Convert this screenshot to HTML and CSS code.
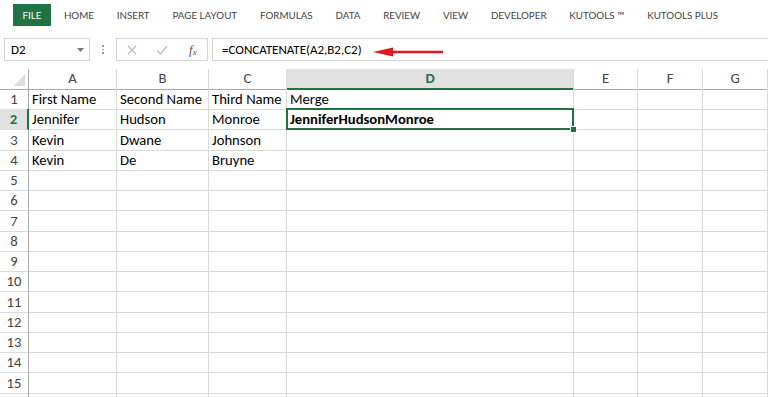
FILE: index.html
```html
<!DOCTYPE html>
<html lang="en">
<head>
<meta charset="utf-8">
<title>Excel CONCATENATE</title>
<link rel="stylesheet" href="styles.css">
</head>
<body>
<div class="ribbon">
  <span class="tab file">FILE</span>
  <span class="tab">HOME</span>
  <span class="tab">INSERT</span>
  <span class="tab">PAGE LAYOUT</span>
  <span class="tab">FORMULAS</span>
  <span class="tab">DATA</span>
  <span class="tab">REVIEW</span>
  <span class="tab">VIEW</span>
  <span class="tab">DEVELOPER</span>
  <span class="tab">KUTOOLS ™</span>
  <span class="tab">KUTOOLS PLUS</span>
</div>

<div class="fbar">
  <div class="namebox">
    <span class="name">D2</span>
    <svg class="drop" width="7" height="4" viewBox="0 0 7 4"><path d="M0 0H7L3.5 4Z" fill="#7a7a7a"/></svg>
  </div>
  <div class="dots"><i></i><i></i><i></i></div>
  <div class="buttons">
    <svg class="btn" width="10" height="10" viewBox="0 0 10 10"><path d="M1 1L9 9M9 1L1 9" stroke="#bdbdbd" stroke-width="1.2" fill="none"/></svg>
    <svg class="btn" width="12" height="10" viewBox="0 0 12 10"><path d="M1 5.5L4.5 9L11 1" stroke="#bdbdbd" stroke-width="1.2" fill="none"/></svg>
    <span class="fx">f<sub>x</sub></span>
  </div>
  <div class="formula">
    <span class="ftext">=CONCATENATE(A2,B2,C2)</span>
    <svg class="arrow" width="72" height="12" viewBox="0 0 72 12"><path d="M0 6L20 1.5V4.8H70V7.2H20V10.5Z" fill="#e3191c"/></svg>
  </div>
</div>

<div class="sheet">
  <div class="row head">
    <div class="cell corner"><svg width="12" height="12" viewBox="0 0 12 12"><path d="M11 0V12H0Z" fill="#dedede"/></svg></div>
    <div class="cell col">A</div>
    <div class="cell col">B</div>
    <div class="cell col">C</div>
    <div class="cell col sel">D</div>
    <div class="cell col">E</div>
    <div class="cell col">F</div>
    <div class="cell col">G</div>
  </div>
  <div class="row">
    <div class="cell num">1</div>
    <div class="cell">First Name</div>
    <div class="cell">Second Name</div>
    <div class="cell">Third Name</div>
    <div class="cell">Merge</div>
    <div class="cell"></div><div class="cell"></div><div class="cell"></div>
  </div>
  <div class="row">
    <div class="cell num sel">2</div>
    <div class="cell">Jennifer</div>
    <div class="cell">Hudson</div>
    <div class="cell">Monroe</div>
    <div class="cell active"><b>JenniferHudsonMonroe</b></div>
    <div class="cell"></div><div class="cell"></div><div class="cell"></div>
  </div>
  <div class="row">
    <div class="cell num">3</div>
    <div class="cell">Kevin</div>
    <div class="cell">Dwane</div>
    <div class="cell">Johnson</div>
    <div class="cell"></div><div class="cell"></div><div class="cell"></div><div class="cell"></div>
  </div>
  <div class="row">
    <div class="cell num">4</div>
    <div class="cell">Kevin</div>
    <div class="cell">De</div>
    <div class="cell">Bruyne</div>
    <div class="cell"></div><div class="cell"></div><div class="cell"></div><div class="cell"></div>
  </div>
  <div class="row"><div class="cell num">5</div><div class="cell"></div><div class="cell"></div><div class="cell"></div><div class="cell"></div><div class="cell"></div><div class="cell"></div><div class="cell"></div></div>
  <div class="row"><div class="cell num">6</div><div class="cell"></div><div class="cell"></div><div class="cell"></div><div class="cell"></div><div class="cell"></div><div class="cell"></div><div class="cell"></div></div>
  <div class="row"><div class="cell num">7</div><div class="cell"></div><div class="cell"></div><div class="cell"></div><div class="cell"></div><div class="cell"></div><div class="cell"></div><div class="cell"></div></div>
  <div class="row"><div class="cell num">8</div><div class="cell"></div><div class="cell"></div><div class="cell"></div><div class="cell"></div><div class="cell"></div><div class="cell"></div><div class="cell"></div></div>
  <div class="row"><div class="cell num">9</div><div class="cell"></div><div class="cell"></div><div class="cell"></div><div class="cell"></div><div class="cell"></div><div class="cell"></div><div class="cell"></div></div>
  <div class="row"><div class="cell num">10</div><div class="cell"></div><div class="cell"></div><div class="cell"></div><div class="cell"></div><div class="cell"></div><div class="cell"></div><div class="cell"></div></div>
  <div class="row"><div class="cell num">11</div><div class="cell"></div><div class="cell"></div><div class="cell"></div><div class="cell"></div><div class="cell"></div><div class="cell"></div><div class="cell"></div></div>
  <div class="row"><div class="cell num">12</div><div class="cell"></div><div class="cell"></div><div class="cell"></div><div class="cell"></div><div class="cell"></div><div class="cell"></div><div class="cell"></div></div>
  <div class="row"><div class="cell num">13</div><div class="cell"></div><div class="cell"></div><div class="cell"></div><div class="cell"></div><div class="cell"></div><div class="cell"></div><div class="cell"></div></div>
  <div class="row"><div class="cell num">14</div><div class="cell"></div><div class="cell"></div><div class="cell"></div><div class="cell"></div><div class="cell"></div><div class="cell"></div><div class="cell"></div></div>
  <div class="row"><div class="cell num">15</div><div class="cell"></div><div class="cell"></div><div class="cell"></div><div class="cell"></div><div class="cell"></div><div class="cell"></div><div class="cell"></div></div>
  <div class="row"><div class="cell num"></div><div class="cell"></div><div class="cell"></div><div class="cell"></div><div class="cell"></div><div class="cell"></div><div class="cell"></div><div class="cell"></div></div>
</div>
</body>
</html>
```
FILE: styles.css
```css
* { box-sizing: border-box; }
html, body { margin: 0; padding: 0; background: #fff; overflow: hidden; }
body {
  width: 768px;
  height: 397px;
  font-family: "Carlito", "Lato", "Liberation Sans", sans-serif;
  color: #000;
}

/* Ribbon */
.ribbon {
  display: flex;
  height: 30px;
  padding: 4px 0 0 13px;
  font-family: "Lato", "Open Sans", sans-serif;
  font-size: 9.8px;
  color: #444;
}
.tab {
  height: 22px;
  line-height: 22px;
  padding: 0 11.4px;
  white-space: nowrap;
}
.tab.file {
  background: #217346;
  color: #fff;
  padding: 0 9.5px;
  margin-right: 1.5px;
}

/* Formula bar */
.fbar {
  display: flex;
  align-items: stretch;
  height: 23px;
  margin-top: 8px;
  padding-left: 4px;
}
.namebox {
  width: 86px;
  border: 1px solid #d5d5d5;
  display: flex;
  align-items: center;
  justify-content: space-between;
  padding: 0 5px 0 6px;
  font-size: 13px;
}
.dots {
  width: 26px;
  display: flex;
  flex-direction: column;
  align-items: center;
  justify-content: center;
  gap: 2px;
}
.dots i {
  width: 1.5px;
  height: 1.5px;
  background: #9a9a9a;
}
.buttons {
  width: 92px;
  border: 1px solid #d5d5d5;
  display: flex;
  align-items: center;
  padding-left: 10px;
  gap: 19px;
}
.fx {
  font-family: "Liberation Serif", serif;
  font-style: italic;
  font-size: 13px;
  color: #555;
  margin-left: 2px;
}
.fx sub { font-size: 9px; vertical-align: -1px; }
.formula {
  flex: 1;
  margin-left: 4px;
  border: 1px solid #d5d5d5;
  border-right: none;
  display: flex;
  align-items: center;
  padding-left: 9px;
  position: relative;
  font-size: 13px;
}
.arrow {
  position: absolute;
  left: 160px;
  top: 7px;
}

/* Sheet */
.sheet { margin-top: 8px; }
.row {
  display: grid;
  grid-template-columns: 29px 88px 92px 78px 287px 64px 65px 65px;
  height: 20.25px;
}
.row.head { height: 20px; }
.cell {
  border-right: 1px solid #dadada;
  border-bottom: 1px solid #dadada;
  padding-left: 3px;
  font-size: 14.67px;
  line-height: 20px;
  white-space: nowrap;
  overflow: visible;
}
.head .cell {
  border-bottom: 1px solid #ababab;
  text-align: center;
  padding-left: 0;
  color: #444;
  line-height: 19px;
}
.corner {
  display: flex;
  align-items: flex-end;
  justify-content: flex-end;
  padding: 0 2px 3px 0 !important;
}
.num {
  text-align: center;
  padding-left: 0;
  color: #444;
  border-right: 1px solid #ababab;
}
.head .corner { border-right: 1px solid #ababab; }
.head .col.sel {
  background: #e1e1e1;
  color: #217346;
  font-weight: bold;
  border-bottom: 2px solid #217346;
}
.num.sel {
  background: #e1e1e1;
  color: #217346;
  font-weight: bold;
  border-right: 2px solid #217346;
}
.active { position: relative; }
.active::after {
  content: "";
  position: absolute;
  left: -1px;
  top: -1px;
  right: -1px;
  bottom: -1px;
  border: 2px solid #217346;
  pointer-events: none;
}
.active::before {
  content: "";
  position: absolute;
  right: -3px;
  bottom: -3px;
  width: 5px;
  height: 5px;
  background: #217346;
  box-shadow: 0 0 0 1px #fff;
  z-index: 2;
}
```
